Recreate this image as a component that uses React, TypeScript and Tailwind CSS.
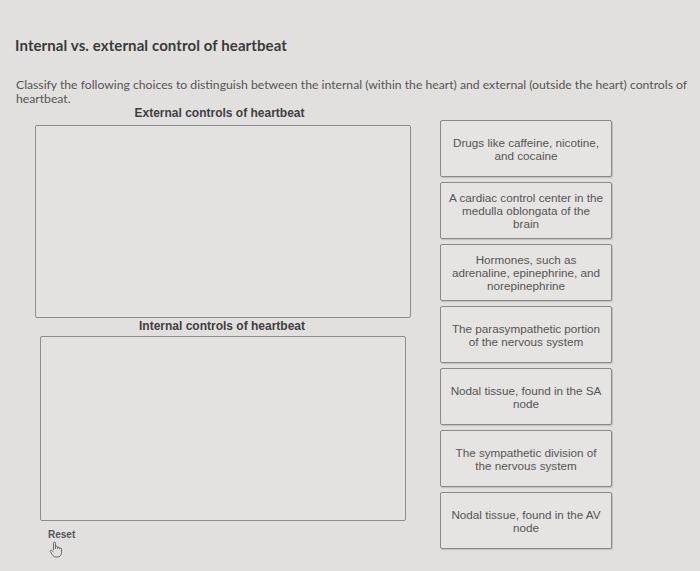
import React from "react";

const cards: string[][] = [
  ["Drugs like caffeine, nicotine,", "and cocaine"],
  ["A cardiac control center in the", "medulla oblongata of the", "brain"],
  ["Hormones, such as", "adrenaline, epinephrine, and", "norepinephrine"],
  ["The parasympathetic portion", "of the nervous system"],
  ["Nodal tissue, found in the SA", "node"],
  ["The sympathetic division of", "the nervous system"],
  ["Nodal tissue, found in the AV", "node"],
];

function Hand() {
  return (
    <svg width="14" height="17" viewBox="0 0 14 17" fill="none" stroke="#6b6b6b" strokeWidth="1" strokeLinejoin="round">
      <path d="M4.5 9V2.2a1 1 0 0 1 2 0V8 M6.5 7.2V6.2a1 1 0 0 1 2 0V8 M8.5 7.2a1 1 0 0 1 2 0V8.2 M10.5 8a1 1 0 0 1 2 0v3.5c0 2.5-1.5 4.5-4 4.5H7c-1.8 0-2.6-.8-3.6-2.2L1.3 10.6a1 1 0 0 1 1.5-1.2L4.5 11" />
    </svg>
  );
}

export default function App() {
  return (
    <div className="w-[700px] h-[571px] bg-[#e2e0df] overflow-hidden text-[#555]" style={{ fontFamily: "'Liberation Sans', Arial, sans-serif" }}>
      <div className="pt-[36px] pl-[15px]">
        <h1 className="text-[15px] leading-[18px] font-bold text-[#3a3a3a] tracking-[0.1px]" style={{ fontFamily: "Lato, 'Open Sans', sans-serif" }}>
          Internal vs. external control of heartbeat
        </h1>
        <p className="mt-[24px] pl-[1px] text-[12.2px] leading-[14px] text-[#555]" style={{ fontFamily: "Lato, 'Open Sans', sans-serif" }}>
          Classify the following choices to distinguish between the internal (within the heart) and external (outside the heart) controls of
          <br />
          heartbeat.
        </p>
      </div>
      <div className="flex items-start pl-[35px]">
        <div className="w-[376px] flex flex-col">
          <div className="text-[12px] leading-[14px] font-bold text-[#3f3f3f] text-center pr-[7px]">
            External controls of heartbeat
          </div>
          <div className="mt-[5px] h-[193px] border border-[#8d8d8d] rounded-[2px] bg-[#e4e2e1]" />
          <div className="text-[12px] leading-[14px] font-bold text-[#3f3f3f] text-center mt-[1px] pr-[2px]">
            Internal controls of heartbeat
          </div>
          <div className="mt-[3px] ml-[5px] w-[366px] h-[185px] border border-[#8d8d8d] rounded-[2px] bg-[#e4e2e1]" />
          <div className="mt-[9px] ml-[13px] text-[10px] leading-[10px] font-bold text-[#555]">Reset</div>
          <div className="ml-[14px] mt-[1px]">
            <Hand />
          </div>
        </div>
        <div className="ml-[29px] mt-[14px] w-[172px] flex flex-col gap-[5px]">
          {cards.map((lines) => (
            <div
              key={lines.join(" ")}
              className="h-[57px] border border-[#8a8a8a] rounded-[2px] bg-[#e6e4e3] shadow-[1px_1px_1px_rgba(0,0,0,0.15)] flex flex-col items-center justify-center px-[4px] text-center text-[11.7px] leading-[13px] text-[#555]"
            >
              {lines.map((l) => (
                <span key={l} className="whitespace-nowrap">{l}</span>
              ))}
            </div>
          ))}
        </div>
      </div>
    </div>
  );
}
